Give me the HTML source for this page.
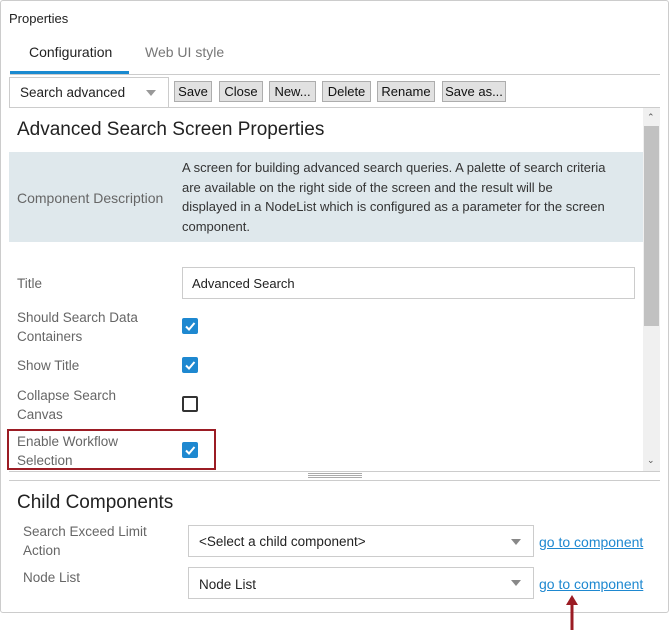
<!DOCTYPE html>
<html><head><style>
*{box-sizing:border-box;margin:0;padding:0}
body{width:669px;height:633px;background:#fff;font-family:"Liberation Sans",sans-serif;font-size:13px;color:#333;position:relative;overflow:hidden}
.a{position:absolute;white-space:nowrap}
.btn{position:absolute;top:81px;height:21px;background:#e1e1e1;border:1px solid #adadad;font-size:13px;line-height:19px;text-align:center;color:#111}
.lbl{position:absolute;color:#666;font-size:13.5px;line-height:19px}
.cb{position:absolute;left:182px;width:16px;height:16px;background:#1e88d0;border-radius:2px}
.cb svg{position:absolute;left:2px;top:2px}
.sel{position:absolute;border:1px solid #ccc;background:#fff;font-size:13.5px;color:#222;padding-left:10px}
.tri{position:absolute;width:0;height:0;border-left:5px solid transparent;border-right:5px solid transparent;border-top:6px solid #888}
a{color:#1e88d0;text-decoration:underline}
</style></head><body>
<div class="a" style="left:0;top:0;width:669px;height:613px;border:1px solid #ccc;border-radius:3px"></div>
<div class="a" style="left:9px;top:11px;color:#222">Properties</div>
<div class="a" style="left:29px;top:44px;color:#222;font-size:14px">Configuration</div>
<div class="a" style="left:145px;top:44px;color:#777;font-size:14px">Web UI style</div>
<div class="a" style="left:10px;top:71px;width:119px;height:3px;background:#1a8ad0"></div>
<div class="a" style="left:10px;top:74px;width:650px;height:1px;background:#ccc"></div>
<div class="sel" style="left:9px;top:77px;width:160px;height:31px;line-height:30px">Search advanced</div>
<div class="tri" style="left:146px;top:90px;border-top-color:#999"></div>
<div class="btn" style="left:174px;width:38px">Save</div>
<div class="btn" style="left:219px;width:44px">Close</div>
<div class="btn" style="left:269px;width:47px">New...</div>
<div class="btn" style="left:322px;width:49px">Delete</div>
<div class="btn" style="left:377px;width:58px">Rename</div>
<div class="btn" style="left:442px;width:64px">Save as...</div>
<div class="a" style="left:9px;top:107px;width:651px;height:1px;background:#ccc"></div>
<div class="a" style="left:643px;top:108px;width:17px;height:363px;background:#f0f0f0"></div>
<div class="a" style="left:644px;top:126px;width:15px;height:200px;background:#c1c1c1"></div>
<div class="a" style="left:647px;top:112px;font-size:9px;color:#555">&#8963;</div>
<div class="a" style="left:647px;top:455px;font-size:9px;color:#555">&#8964;</div>
<div class="a" style="left:17px;top:119px;font-size:19px;color:#222">Advanced Search Screen Properties</div>
<div class="a" style="left:9px;top:152px;width:634px;height:90px;background:#dfe8ec"></div>
<div class="lbl" style="left:17px;top:189px;font-size:14px">Component Description</div>
<div class="a" style="left:182px;top:158px;line-height:19.5px;color:#333;font-size:13px">A screen for building advanced search queries. A palette of search criteria<br>are available on the right side of the screen and the result will be<br>displayed in a NodeList which is configured as a parameter for the screen<br>component.</div>
<div class="lbl" style="left:17px;top:274px">Title</div>
<div class="sel" style="left:182px;top:267px;width:453px;height:32px;line-height:31px;padding-left:9px;font-size:13px">Advanced Search</div>
<div class="lbl" style="left:17px;top:308px">Should Search Data<br>Containers</div>
<div class="cb" style="top:318px"><svg width="12" height="12"><path d="M2 6.5L5 9.5L10.5 3" stroke="#fff" stroke-width="2" fill="none"/></svg></div>
<div class="lbl" style="left:17px;top:356px">Show Title</div>
<div class="cb" style="top:357px"><svg width="12" height="12"><path d="M2 6.5L5 9.5L10.5 3" stroke="#fff" stroke-width="2" fill="none"/></svg></div>
<div class="lbl" style="left:17px;top:386px">Collapse Search<br>Canvas</div>
<div class="a" style="left:182px;top:396px;width:16px;height:16px;border:2px solid #333;border-radius:2px"></div>
<div class="lbl" style="left:17px;top:432px">Enable Workflow<br>Selection</div>
<div class="cb" style="top:442px"><svg width="12" height="12"><path d="M2 6.5L5 9.5L10.5 3" stroke="#fff" stroke-width="2" fill="none"/></svg></div>
<div class="a" style="left:7px;top:429px;width:209px;height:41px;border:2px solid #9b1c24"></div>
<div class="a" style="left:9px;top:471px;width:651px;height:1px;background:#ccc"></div>
<div class="a" style="left:308px;top:473px;width:54px;height:5px;border-top:1px solid #aaa;border-bottom:1px solid #aaa"></div>
<div class="a" style="left:308px;top:475px;width:54px;height:1px;background:#aaa"></div>
<div class="a" style="left:9px;top:480px;width:651px;height:1px;background:#ccc"></div>
<div class="a" style="left:17px;top:492px;font-size:19px;color:#222">Child Components</div>
<div class="lbl" style="left:23px;top:522px">Search Exceed Limit<br>Action</div>
<div class="sel" style="left:188px;top:525px;width:346px;height:32px;line-height:31px">&lt;Select a child component&gt;</div>
<div class="tri" style="left:511px;top:539px"></div>
<div class="a" style="left:539px;top:534px;font-size:14px"><a>go to component</a></div>
<div class="lbl" style="left:23px;top:568px">Node List</div>
<div class="sel" style="left:188px;top:567px;width:346px;height:32px;line-height:34px">Node List</div>
<div class="tri" style="left:511px;top:580px"></div>
<div class="a" style="left:539px;top:576px;font-size:14px"><a>go to component</a></div>
<svg class="a" style="left:564px;top:594px" width="16" height="36"><path d="M8 36V10" stroke="#9b1c24" stroke-width="3"/><path d="M2 11L8 1L14 11Z" fill="#9b1c24"/></svg>
</body></html>
